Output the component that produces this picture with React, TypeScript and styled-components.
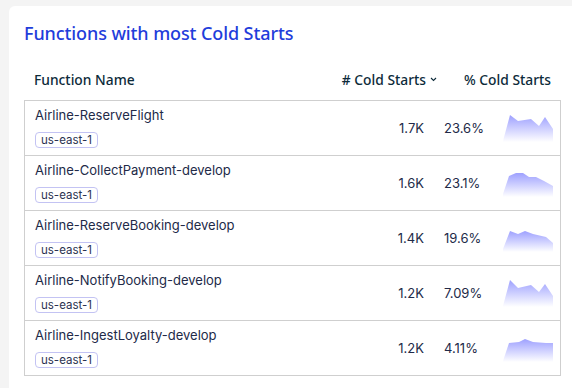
import styled, { createGlobalStyle } from 'styled-components';

const GlobalStyle = createGlobalStyle`
  html, body {
    margin: 0;
    padding: 0;
    background: #f4f4f4;
    overflow: hidden;
  }
`;

const Page = styled.div`
  width: 572px;
  height: 388px;
  overflow: hidden;
  padding: 6px 0 0 9px;
  box-sizing: border-box;
`;

const Card = styled.div`
  width: 600px;
  height: 420px;
  background: #ffffff;
  border-radius: 6px;
  padding: 15px 0 0 15px;
  box-sizing: border-box;
`;

const Title = styled.h2`
  margin: 0;
  font-family: 'Noto Sans', sans-serif;
  font-weight: 500;
  font-size: 18px;
  line-height: 24px;
  color: #1f3ddb;
  letter-spacing: -0.1px;
`;

const Table = styled.div`
  width: 537px;
  margin-top: 23px;
  font-family: Inter, sans-serif;
`;

const HeaderRow = styled.div`
  display: flex;
  align-items: center;
  height: 32px;
  padding: 0 10px 9px 10px;
  box-sizing: border-box;
  font-family: 'Noto Sans', sans-serif;
  font-weight: 500;
  font-size: 13.8px;
  color: #0d2b3a;
`;

const HeaderCell = styled.div<{ $grow?: boolean; $gap?: number }>`
  flex: ${({ $grow }) => ($grow ? 1 : 'none')};
  margin-left: ${({ $gap }) => $gap ?? 0}px;
  display: flex;
  align-items: center;
  gap: 4px;
`;

const Body = styled.div`
  border: 1px solid #cfcfcf;
  border-bottom: none;
`;

const Row = styled.div`
  display: grid;
  grid-template-columns: 1fr 60px 59px 50px;
  align-items: center;
  height: 55px;
  padding: 0 7px 0 10px;
  border-bottom: 1px solid #cfcfcf;
  box-sizing: border-box;
  color: #222a48;
  font-size: 13px;
`;

const NameCell = styled.div`
  display: flex;
  flex-direction: column;
  align-items: flex-start;
  gap: 9px;
  margin-top: -1px;
`;

const Tag = styled.span`
  display: inline-block;
  font-size: 11.5px;
  line-height: 14px;
  padding: 0 5px;
  border: 1px solid #c3c3f3;
  border-radius: 4px;
  color: #2a3150;
`;

const Count = styled.div`
  text-align: right;
  margin-right: 20px;
  margin-left: -20px;
`;

const Pct = styled.div`
  text-align: left;
`;

const Spark = styled.svg`
  display: block;
  width: 50px;
  height: 28px;
`;

type Item = {
  name: string;
  count: string;
  pct: string;
  points: number[][];
};

const items: Item[] = [
  {
    name: 'Airline-ReserveFlight',
    count: '1.7K',
    pct: '23.6%',
    points: [[0, 27], [7, 1], [15, 7], [28, 5], [36, 12], [42, 3], [50, 15]],
  },
  {
    name: 'Airline-CollectPayment-develop',
    count: '1.6K',
    pct: '23.1%',
    points: [[0, 25], [6, 7], [13, 4], [20, 4], [26, 8], [33, 8], [41, 12], [50, 17]],
  },
  {
    name: 'Airline-ReserveBooking-develop',
    count: '1.4K',
    pct: '19.6%',
    points: [[0, 25], [7, 7], [15, 10], [22, 7], [30, 10], [43, 13], [50, 19]],
  },
  {
    name: 'Airline-NotifyBooking-develop',
    count: '1.2K',
    pct: '7.09%',
    points: [[0, 27], [7, 1], [15, 9], [28, 6], [36, 13], [42, 5], [50, 17]],
  },
  {
    name: 'Airline-IngestLoyalty-develop',
    count: '1.2K',
    pct: '4.11%',
    points: [[0, 27], [6, 9], [16, 8], [22, 5], [30, 8], [43, 9], [50, 9]],
  },
];

const Sparkline = ({ points, id }: { points: number[][]; id: string }) => {
  const d =
    points.map(([x, y], i) => `${i === 0 ? 'M' : 'L'}${x} ${y}`).join(' ') + ' L50 28 L0 28 Z';
  return (
    <Spark viewBox="0 0 50 28">
      <defs>
        <linearGradient id={id} x1="0" y1="0" x2="0" y2="1">
          <stop offset="0%" stopColor="#9396ff" stopOpacity="0.9" />
          <stop offset="100%" stopColor="#9396ff" stopOpacity="0" />
        </linearGradient>
      </defs>
      <path d={d} fill={`url(#${id})`} />
    </Spark>
  );
};

const Chevron = () => (
  <svg width="7" height="5" viewBox="0 0 7 5">
    <path d="M1 1 L3.5 3.5 L6 1" fill="none" stroke="#0d2b3a" strokeWidth="1.1" />
  </svg>
);

export default function App() {
  return (
    <>
      <GlobalStyle />
      <Page>
        <Card>
          <Title>Functions with most Cold Starts</Title>
          <Table>
            <HeaderRow>
              <HeaderCell $grow>Function Name</HeaderCell>
              <HeaderCell>
                # Cold Starts <Chevron />
              </HeaderCell>
              <HeaderCell $gap={27}>% Cold Starts</HeaderCell>
            </HeaderRow>
            <Body>
              {items.map((item, i) => (
                <Row key={item.name}>
                  <NameCell>
                    <span>{item.name}</span>
                    <Tag>us-east-1</Tag>
                  </NameCell>
                  <Count>{item.count}</Count>
                  <Pct>{item.pct}</Pct>
                  <Sparkline points={item.points} id={`spark-${i}`} />
                </Row>
              ))}
            </Body>
          </Table>
        </Card>
      </Page>
    </>
  );
}
